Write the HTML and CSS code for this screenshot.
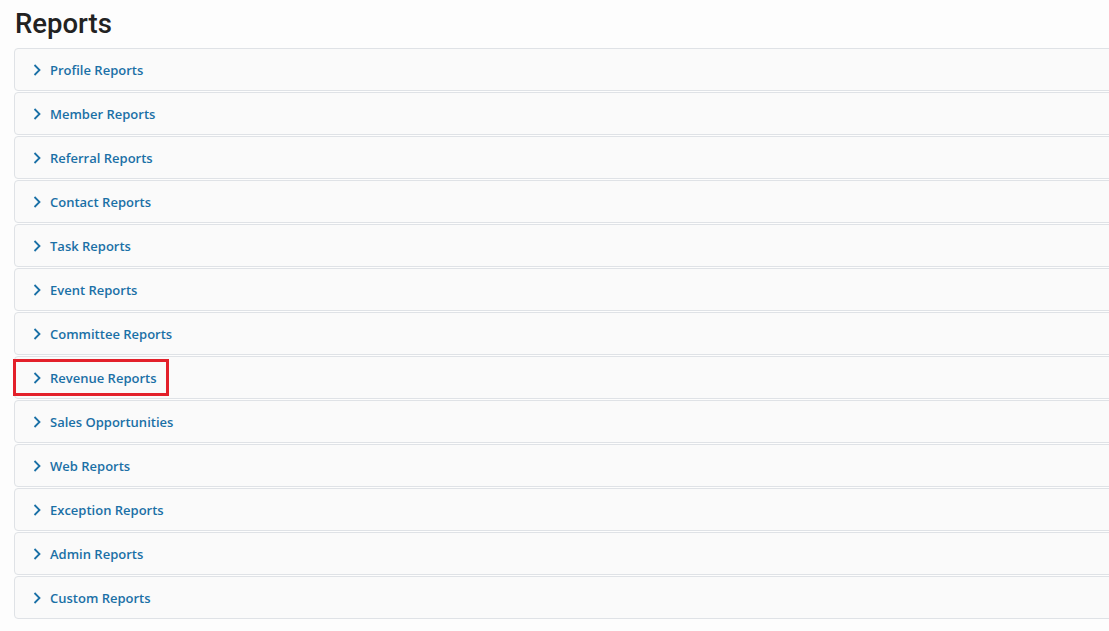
FILE: index.html
```html
<!DOCTYPE html>
<html lang="en">
<head>
<meta charset="utf-8">
<title>Reports</title>
<link rel="stylesheet" href="styles.css">
</head>
<body>
<main class="page">
  <h1 class="title">Reports</h1>
  <div class="accordion">
    <div class="panel"><a class="panel-head" href="#"><svg class="chev" viewBox="0 0 8 12"><path d="M1.5 1 L6.5 6 L1.5 11"/></svg><span>Profile Reports</span></a></div>
    <div class="panel"><a class="panel-head" href="#"><svg class="chev" viewBox="0 0 8 12"><path d="M1.5 1 L6.5 6 L1.5 11"/></svg><span>Member Reports</span></a></div>
    <div class="panel"><a class="panel-head" href="#"><svg class="chev" viewBox="0 0 8 12"><path d="M1.5 1 L6.5 6 L1.5 11"/></svg><span>Referral Reports</span></a></div>
    <div class="panel"><a class="panel-head" href="#"><svg class="chev" viewBox="0 0 8 12"><path d="M1.5 1 L6.5 6 L1.5 11"/></svg><span>Contact Reports</span></a></div>
    <div class="panel"><a class="panel-head" href="#"><svg class="chev" viewBox="0 0 8 12"><path d="M1.5 1 L6.5 6 L1.5 11"/></svg><span>Task Reports</span></a></div>
    <div class="panel"><a class="panel-head" href="#"><svg class="chev" viewBox="0 0 8 12"><path d="M1.5 1 L6.5 6 L1.5 11"/></svg><span>Event Reports</span></a></div>
    <div class="panel"><a class="panel-head" href="#"><svg class="chev" viewBox="0 0 8 12"><path d="M1.5 1 L6.5 6 L1.5 11"/></svg><span>Committee Reports</span></a></div>
    <div class="panel highlighted"><a class="panel-head" href="#"><svg class="chev" viewBox="0 0 8 12"><path d="M1.5 1 L6.5 6 L1.5 11"/></svg><span>Revenue Reports</span></a><div class="mark"></div></div>
    <div class="panel"><a class="panel-head" href="#"><svg class="chev" viewBox="0 0 8 12"><path d="M1.5 1 L6.5 6 L1.5 11"/></svg><span>Sales Opportunities</span></a></div>
    <div class="panel"><a class="panel-head" href="#"><svg class="chev" viewBox="0 0 8 12"><path d="M1.5 1 L6.5 6 L1.5 11"/></svg><span>Web Reports</span></a></div>
    <div class="panel"><a class="panel-head" href="#"><svg class="chev" viewBox="0 0 8 12"><path d="M1.5 1 L6.5 6 L1.5 11"/></svg><span>Exception Reports</span></a></div>
    <div class="panel"><a class="panel-head" href="#"><svg class="chev" viewBox="0 0 8 12"><path d="M1.5 1 L6.5 6 L1.5 11"/></svg><span>Admin Reports</span></a></div>
    <div class="panel"><a class="panel-head" href="#"><svg class="chev" viewBox="0 0 8 12"><path d="M1.5 1 L6.5 6 L1.5 11"/></svg><span>Custom Reports</span></a></div>
  </div>
</main>
</body>
</html>
```
FILE: styles.css
```css
html, body {
  margin: 0;
  padding: 0;
  background: #fdfdfd;
  overflow: hidden;
}
.page {
  padding: 6px 0 0 14px;
  width: 1120px;
}
.title {
  margin: 0 0 7px 1px;
  font-family: Roboto, "Liberation Sans", sans-serif;
  font-weight: 500;
  font-size: 27.5px;
  line-height: 35px;
  color: #222222;
}
.accordion {
  display: flex;
  flex-direction: column;
  gap: 1px;
}
.panel {
  position: relative;
  height: 41px;
  border: 1px solid #dfe2e6;
  border-radius: 4px;
  background: #fafafa;
}
.panel-head {
  display: flex;
  align-items: center;
  height: 100%;
  padding-left: 18px;
  gap: 9px;
  text-decoration: none;
  font-family: "Open Sans", "Noto Sans", sans-serif;
  font-weight: 600;
  font-size: 13px;
  color: #1a70a6;
}
.chev {
  width: 8px;
  height: 12px;
  fill: none;
  stroke: #1a70a6;
  stroke-width: 1.8;
}
.mark {
  position: absolute;
  left: -2px;
  top: 2px;
  width: 150px;
  height: 31px;
  border: 3px solid #e3202a;
  pointer-events: none;
}
```
